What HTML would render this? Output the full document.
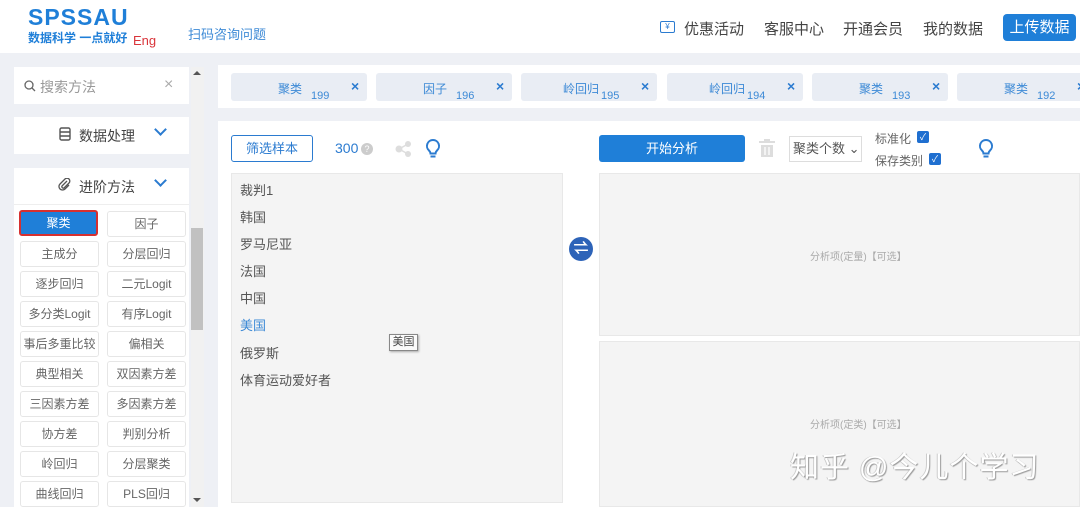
<!DOCTYPE html>
<html><head><meta charset="utf-8"><style>
*{margin:0;padding:0;box-sizing:border-box}
body{width:1080px;height:507px;overflow:hidden;background:#eef0f5;font-family:"Liberation Sans","Noto Sans CJK SC",sans-serif;position:relative;color:#555}
.a{position:absolute}
.hdr{left:0;top:0;width:1080px;height:53px;background:#fff}
.w{background:#fff}
.tab{top:73px;width:136px;height:28px;background:#e9edf4;border-radius:3px;color:#3d8ad6;font-size:12px}
.tab .t{position:absolute;left:47px;top:7px}
.tab .n{position:absolute;left:80px;top:17px;font-size:11px}
.tab .x{position:absolute;left:120px;top:5px;font-size:14px;color:#2b7bd0;font-weight:bold}
.btn{width:79px;height:26px;border:1px solid #e6e6e6;border-radius:3px;font-size:12px;color:#666;text-align:center;line-height:24px;background:#fff}
.li{left:240px;font-size:13px;color:#555}
</style></head><body>
<div class="a hdr"></div>
<div class="a" style="left:28px;top:4px;font-size:23px;font-weight:bold;color:#1f7fd8;letter-spacing:1px">SPSSAU</div>
<div class="a" style="left:28px;top:29px;font-size:12px;color:#1f7fd8;font-weight:bold">数据科学 一点就好</div>
<div class="a" style="left:133px;top:33px;font-size:13px;color:#d9343a">Eng</div>
<div class="a" style="left:188px;top:24px;font-size:13px;color:#3d8ad6">扫码咨询问题</div>
<div class="a" style="left:660px;top:21px;width:15px;height:12px;border:1.5px solid #2b7bd0;border-radius:2px;font-size:8px;color:#2b7bd0;text-align:center;line-height:9px">¥</div>
<div class="a" style="left:684px;top:18px;font-size:15px;color:#444">优惠活动</div>
<div class="a" style="left:764px;top:18px;font-size:15px;color:#444">客服中心</div>
<div class="a" style="left:843px;top:18px;font-size:15px;color:#444">开通会员</div>
<div class="a" style="left:923px;top:18px;font-size:15px;color:#444">我的数据</div>
<div class="a" style="left:1003px;top:14px;width:73px;height:27px;background:#1f7fd8;border-radius:4px;color:#fff;font-size:15px;text-align:center;line-height:27px">上传数据</div>

<!-- sidebar -->
<div class="a w" style="left:14px;top:67px;width:175px;height:37px"></div>
<svg class="a" style="left:24px;top:80px" width="12" height="12" viewBox="0 0 12 12"><circle cx="5" cy="5" r="4" fill="none" stroke="#666" stroke-width="1.3"/><path d="M8 8l3 3" stroke="#666" stroke-width="1.3"/></svg>
<div class="a" style="left:40px;top:77px;font-size:14px;color:#999">搜索方法</div>
<div class="a" style="left:164px;top:76px;font-size:16px;color:#aaa">×</div>
<div class="a w" style="left:14px;top:117px;width:175px;height:37px"></div>
<svg class="a" style="left:59px;top:127px" width="12" height="14" viewBox="0 0 12 14"><rect x="1" y="1" width="10" height="12" rx="1.5" fill="none" stroke="#555" stroke-width="1.4"/><path d="M1 5h10M1 9h10" stroke="#555" stroke-width="1.4"/></svg>
<div class="a" style="left:79px;top:126px;font-size:14px;color:#444">数据处理</div>
<div class="a" style="left:156px;top:125px;width:9px;height:9px;border-right:2px solid #2b7bd0;border-bottom:2px solid #2b7bd0;transform:rotate(45deg)"></div>
<div class="a w" style="left:14px;top:168px;width:175px;height:339px"></div>
<svg class="a" style="left:58px;top:178px" width="14" height="14" viewBox="0 0 14 14"><path d="M9 3L4 8a1.5 1.5 0 0 0 2 2l5-5a2.5 2.5 0 0 0-4-4L2 6a3.5 3.5 0 0 0 5 5l4-4" fill="none" stroke="#555" stroke-width="1.3"/></svg>
<div class="a" style="left:79px;top:177px;font-size:14px;color:#444">进阶方法</div>
<div class="a" style="left:156px;top:176px;width:9px;height:9px;border-right:2px solid #2b7bd0;border-bottom:2px solid #2b7bd0;transform:rotate(45deg)"></div>
<div class="a" style="left:14px;top:204px;width:175px;height:1px;background:#eee"></div>
<div class="a btn" style="left:19px;top:210px;background:#1f7fd8;color:#fff;border:2px solid #d63030;line-height:22px">聚类</div>
<div class="a btn" style="left:107px;top:211px">因子</div>
<div class="a btn" style="left:20px;top:241px">主成分</div><div class="a btn" style="left:107px;top:241px">分层回归</div>
<div class="a btn" style="left:20px;top:271px">逐步回归</div><div class="a btn" style="left:107px;top:271px">二元Logit</div>
<div class="a btn" style="left:20px;top:301px">多分类Logit</div><div class="a btn" style="left:107px;top:301px">有序Logit</div>
<div class="a btn" style="left:20px;top:331px">事后多重比较</div><div class="a btn" style="left:107px;top:331px">偏相关</div>
<div class="a btn" style="left:20px;top:361px">典型相关</div><div class="a btn" style="left:107px;top:361px">双因素方差</div>
<div class="a btn" style="left:20px;top:391px">三因素方差</div><div class="a btn" style="left:107px;top:391px">多因素方差</div>
<div class="a btn" style="left:20px;top:421px">协方差</div><div class="a btn" style="left:107px;top:421px">判别分析</div>
<div class="a btn" style="left:20px;top:451px">岭回归</div><div class="a btn" style="left:107px;top:451px">分层聚类</div>
<div class="a btn" style="left:20px;top:481px">曲线回归</div><div class="a btn" style="left:107px;top:481px">PLS回归</div>
<div class="a" style="left:191px;top:67px;width:13px;height:440px;background:#f1f1f1"></div>
<div class="a" style="left:191px;top:228px;width:12px;height:102px;background:#c1c1c1"></div>
<div class="a" style="left:193px;top:71px;border:4px solid transparent;border-bottom:4px solid #555;border-top:0"></div>
<div class="a" style="left:193px;top:498px;border:4px solid transparent;border-top:4px solid #555;border-bottom:0"></div>

<!-- tabs -->
<div class="a w" style="left:218px;top:65px;width:862px;height:43px"></div>
<div class="a tab" style="left:231px"><span class="t">聚类</span><span class="n">199</span><span class="x">×</span></div>
<div class="a tab" style="left:376px"><span class="t">因子</span><span class="n">196</span><span class="x">×</span></div>
<div class="a tab" style="left:521px"><span class="t" style="left:42px">岭回归</span><span class="n">195</span><span class="x">×</span></div>
<div class="a tab" style="left:667px"><span class="t" style="left:42px">岭回归</span><span class="n">194</span><span class="x">×</span></div>
<div class="a tab" style="left:812px"><span class="t">聚类</span><span class="n">193</span><span class="x">×</span></div>
<div class="a tab" style="left:957px"><span class="t">聚类</span><span class="n">192</span><span class="x">×</span></div>

<!-- main -->
<div class="a w" style="left:218px;top:121px;width:862px;height:386px"></div>
<div class="a" style="left:231px;top:135px;width:82px;height:27px;border:1px solid #2b7bd0;border-radius:3px;color:#2b7bd0;font-size:13px;text-align:center;line-height:25px">筛选样本</div>
<div class="a" style="left:335px;top:140px;font-size:14px;color:#2b7bd0">300</div>
<div class="a" style="left:361px;top:143px;width:12px;height:12px;border-radius:50%;background:#ccc;color:#fff;font-size:9px;text-align:center;line-height:12px">?</div>
<svg class="a" style="left:395px;top:141px" width="18" height="16" viewBox="0 0 18 16"><circle cx="4" cy="8" r="3.5" fill="#ddd"/><circle cx="13" cy="3" r="3" fill="#ddd"/><circle cx="13" cy="13" r="3" fill="#ddd"/><path d="M4 8L13 3M4 8l9 5" stroke="#ddd" stroke-width="1.5"/></svg>
<svg class="a" style="left:425px;top:138px" width="16" height="22" viewBox="0 0 16 22"><path d="M8 2a6 6 0 0 0-4 10.5c1 1 1.5 2 1.5 3h5c0-1 .5-2 1.5-3A6 6 0 0 0 8 2z" fill="none" stroke="#2b7bd0" stroke-width="2"/><path d="M5.5 18.5h5" stroke="#2b7bd0" stroke-width="2"/></svg>
<div class="a" style="left:231px;top:173px;width:332px;height:330px;background:#f4f4f4;border:1px solid #e8e8e8"></div>
<div class="a li" style="top:180px">裁判1</div>
<div class="a li" style="top:207px">韩国</div>
<div class="a li" style="top:234px">罗马尼亚</div>
<div class="a li" style="top:261px">法国</div>
<div class="a li" style="top:288px">中国</div>
<div class="a li" style="top:315px;color:#3d8ad6">美国</div>
<div class="a li" style="top:343px">俄罗斯</div>
<div class="a li" style="top:370px">体育运动爱好者</div>
<div class="a" style="left:389px;top:334px;width:29px;height:17px;border:1px solid #888;background:#fafafa;font-size:11px;line-height:15px;text-align:center;color:#444;box-shadow:1px 1px 2px #aaa">美国</div>
<div class="a" style="left:569px;top:237px;width:24px;height:24px;border-radius:50%;background:#2d63b8;color:#fff;font-size:15px;text-align:center;line-height:23px;font-weight:bold">⇌</div>
<div class="a" style="left:599px;top:135px;width:146px;height:27px;background:#1f7fd8;border-radius:3px;color:#fff;font-size:13px;text-align:center;line-height:27px">开始分析</div>
<svg class="a" style="left:759px;top:139px" width="16" height="19" viewBox="0 0 16 19"><rect x="0" y="2" width="16" height="2" fill="#ddd"/><rect x="5" y="0" width="6" height="2" fill="#ddd"/><path d="M2 6h12v12H2z" fill="#ddd"/><path d="M6 8v8M10 8v8" stroke="#fff" stroke-width="1.3"/></svg>
<div class="a" style="left:789px;top:136px;width:73px;height:26px;border:1px solid #ddd;font-size:13px;color:#555;line-height:24px;padding-left:3px">聚类个数 ⌄</div>
<div class="a" style="left:875px;top:130px;font-size:12px;color:#666">标准化</div>
<div class="a" style="left:917px;top:131px;width:12px;height:12px;background:#1f6fd0;border-radius:2px;color:#fff;font-size:9px;text-align:center;line-height:12px">✓</div>
<div class="a" style="left:875px;top:152px;font-size:12px;color:#666">保存类别</div>
<div class="a" style="left:929px;top:153px;width:12px;height:12px;background:#1f6fd0;border-radius:2px;color:#fff;font-size:9px;text-align:center;line-height:12px">✓</div>
<svg class="a" style="left:978px;top:138px" width="16" height="22" viewBox="0 0 16 22"><path d="M8 2a6 6 0 0 0-4 10.5c1 1 1.5 2 1.5 3h5c0-1 .5-2 1.5-3A6 6 0 0 0 8 2z" fill="none" stroke="#2b7bd0" stroke-width="2"/><path d="M5.5 18.5h5" stroke="#2b7bd0" stroke-width="2"/></svg>
<div class="a" style="left:599px;top:173px;width:481px;height:163px;background:#f4f4f4;border:1px solid #e8e8e8"></div>
<div class="a" style="left:810px;top:248px;font-size:10px;color:#aaa">分析项(定量)【可选】</div>
<div class="a" style="left:599px;top:341px;width:481px;height:166px;background:#f4f4f4;border:1px solid #e8e8e8"></div>
<div class="a" style="left:810px;top:416px;font-size:10px;color:#aaa">分析项(定类)【可选】</div>
<div class="a" style="left:790px;top:444px;font-size:29px;color:#fff;text-shadow:1px 1px 1px #999,-1px 0 0 #ccc;letter-spacing:1px">知乎 @今儿个学习</div>
</body></html>
